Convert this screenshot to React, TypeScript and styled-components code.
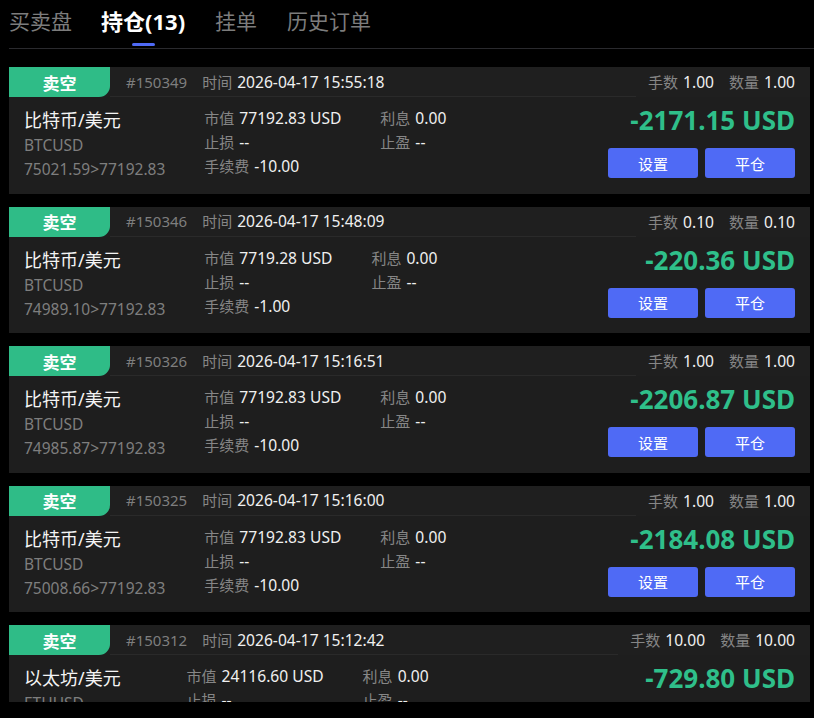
import React from "react";
import styled, { createGlobalStyle } from "styled-components";

const GlobalStyle = createGlobalStyle`
  html, body { margin: 0; padding: 0; background: #000; }
  body { font-family: "Noto Sans", "Noto Sans CJK SC", sans-serif; color: #eaeaea; }
  * { box-sizing: border-box; }
`;

const Page = styled.div`
  width: 814px;
  height: 718px;
  background: #000;
  display: flex;
  flex-direction: column;
`;

const Tabs = styled.div`
  display: flex;
  align-items: center;
  gap: 30px;
  height: 49px;
  margin-left: 9px;
  padding-bottom: 6px;
  border-bottom: 1px solid #2a2a2e;
`;

const Tab = styled.div<{ $active?: boolean }>`
  position: relative;
  font-size: ${(p) => (p.$active ? 22 : 21)}px;
  line-height: 28px;
  font-weight: ${(p) => (p.$active ? 700 : 400)};
  color: ${(p) => (p.$active ? "#ffffff" : "#7c7c7c")};
  margin-left: ${(p) => (p.$active ? -1 : 0)}px;
  &::after {
    content: "";
    display: ${(p) => (p.$active ? "block" : "none")};
    position: absolute;
    left: 50%;
    bottom: -11px;
    width: 23px;
    height: 3px;
    margin-left: -11px;
    border-radius: 2px;
    background: #4f6af5;
  }
`;

const List = styled.div`
  height: 653px;
  overflow: hidden;
  padding: 18px 4px 0 9px;
  display: flex;
  flex-direction: column;
  gap: 13px;
`;

const Card = styled.div`
  flex: none;
  background: #1e1e1e;
  height: 126.5px;
  display: flex;
  flex-direction: column;
`;

const Header = styled.div`
  height: 30px;
  display: flex;
  align-items: stretch;
  background: #1f1f1f;
`;

const Badge = styled.div`
  width: 101px;
  background: #2fbc87;
  color: #fff;
  font-size: 17px;
  font-weight: 700;
  display: flex;
  align-items: center;
  justify-content: center;
  border-bottom-right-radius: 11px;
`;

const HeadInfo = styled.div`
  flex: 1;
  display: flex;
  align-items: center;
  gap: 15px;
  padding-left: 16px;
  border-bottom: 1px solid #2a2a2a;
  font-size: 15px;
`;

const HeadStats = styled.div`
  display: flex;
  align-items: center;
  gap: 15px;
  padding: 0 15px 0 12px;
  font-size: 15px;
`;

const OrderNo = styled.span`
  color: #7e7e7e;
`;

const Label = styled.span`
  color: #868686;
  margin-right: 5px;
`;

const Value = styled.span`
  color: #f0f0f0;
  font-size: 15.6px;
`;

const Body = styled.div`
  flex: 1;
  display: flex;
  padding: 9px 15px 0 15px;
`;

const Col = styled.div<{ $gap?: number; $top?: number }>`
  display: flex;
  flex-direction: column;
  margin-right: ${(p) => p.$gap ?? 0}px;
  padding-top: ${(p) => p.$top ?? 0}px;
  font-size: 15px;
  line-height: 24px;
`;

const Name = styled.div`
  font-size: 18px;
  line-height: 24px;
  color: #f4f4f4;
  margin-bottom: 1px;
`;

const Gray = styled.div`
  color: #7e7e7e;
  font-size: 15.5px;
`;

const Right = styled.div`
  margin-left: auto;
  display: flex;
  flex-direction: column;
  align-items: flex-end;
`;

const Pnl = styled.div`
  font-size: 26px;
  font-weight: 700;
  line-height: 32px;
  color: #2fbf8a;
  margin-top: -2px;
`;

const Buttons = styled.div`
  display: flex;
  gap: 7px;
  margin-top: 12px;
`;

const Btn = styled.button`
  width: 90px;
  height: 30px;
  border: none;
  border-radius: 3px;
  background: #4f6af5;
  color: #fff;
  font-family: inherit;
  font-size: 15px;
  padding: 0;
  cursor: pointer;
`;

type Pos = {
  id: string;
  time: string;
  lots: string;
  qty: string;
  name: string;
  symbol: string;
  price: string;
  value: string;
  interest: string;
  fee: string;
  pnl: string;
};

const data: Pos[] = [
  { id: "#150349", time: "2026-04-17 15:55:18", lots: "1.00", qty: "1.00", name: "比特币/美元", symbol: "BTCUSD", price: "75021.59>77192.83", value: "77192.83 USD", interest: "0.00", fee: "-10.00", pnl: "-2171.15 USD" },
  { id: "#150346", time: "2026-04-17 15:48:09", lots: "0.10", qty: "0.10", name: "比特币/美元", symbol: "BTCUSD", price: "74989.10>77192.83", value: "7719.28 USD", interest: "0.00", fee: "-1.00", pnl: "-220.36 USD" },
  { id: "#150326", time: "2026-04-17 15:16:51", lots: "1.00", qty: "1.00", name: "比特币/美元", symbol: "BTCUSD", price: "74985.87>77192.83", value: "77192.83 USD", interest: "0.00", fee: "-10.00", pnl: "-2206.87 USD" },
  { id: "#150325", time: "2026-04-17 15:16:00", lots: "1.00", qty: "1.00", name: "比特币/美元", symbol: "BTCUSD", price: "75008.66>77192.83", value: "77192.83 USD", interest: "0.00", fee: "-10.00", pnl: "-2184.08 USD" },
  { id: "#150312", time: "2026-04-17 15:12:42", lots: "10.00", qty: "10.00", name: "以太坊/美元", symbol: "ETHUSD", price: "2338.78>2411.66", value: "24116.60 USD", interest: "0.00", fee: "-100.00", pnl: "-729.80 USD" },
];

export default function App() {
  return (
    <Page>
      <GlobalStyle />
      <Tabs>
        <Tab>买卖盘</Tab>
        <Tab $active>持仓(13)</Tab>
        <Tab>挂单</Tab>
        <Tab>历史订单</Tab>
      </Tabs>
      <List>
        {data.map((p) => (
          <Card key={p.id}>
            <Header>
              <Badge>卖空</Badge>
              <HeadInfo>
                <OrderNo>{p.id}</OrderNo>
                <span>
                  <Label>时间</Label>
                  <Value>{p.time}</Value>
                </span>
              </HeadInfo>
              <HeadStats>
                <span>
                  <Label>手数</Label>
                  <Value>{p.lots}</Value>
                </span>
                <span>
                  <Label>数量</Label>
                  <Value>{p.qty}</Value>
                </span>
              </HeadStats>
            </Header>
            <Body>
              <Col $gap={39} $top={2}>
                <Name>{p.name}</Name>
                <Gray>{p.symbol}</Gray>
                <Gray>{p.price}</Gray>
              </Col>
              <Col $gap={39}>
                <div>
                  <Label>市值</Label>
                  <Value>{p.value}</Value>
                </div>
                <div>
                  <Label>止损</Label>
                  <Value>--</Value>
                </div>
                <div>
                  <Label>手续费</Label>
                  <Value>{p.fee}</Value>
                </div>
              </Col>
              <Col>
                <div>
                  <Label>利息</Label>
                  <Value>{p.interest}</Value>
                </div>
                <div>
                  <Label>止盈</Label>
                  <Value>--</Value>
                </div>
              </Col>
              <Right>
                <Pnl>{p.pnl}</Pnl>
                <Buttons>
                  <Btn>设置</Btn>
                  <Btn>平仓</Btn>
                </Buttons>
              </Right>
            </Body>
          </Card>
        ))}
      </List>
    </Page>
  );
}
